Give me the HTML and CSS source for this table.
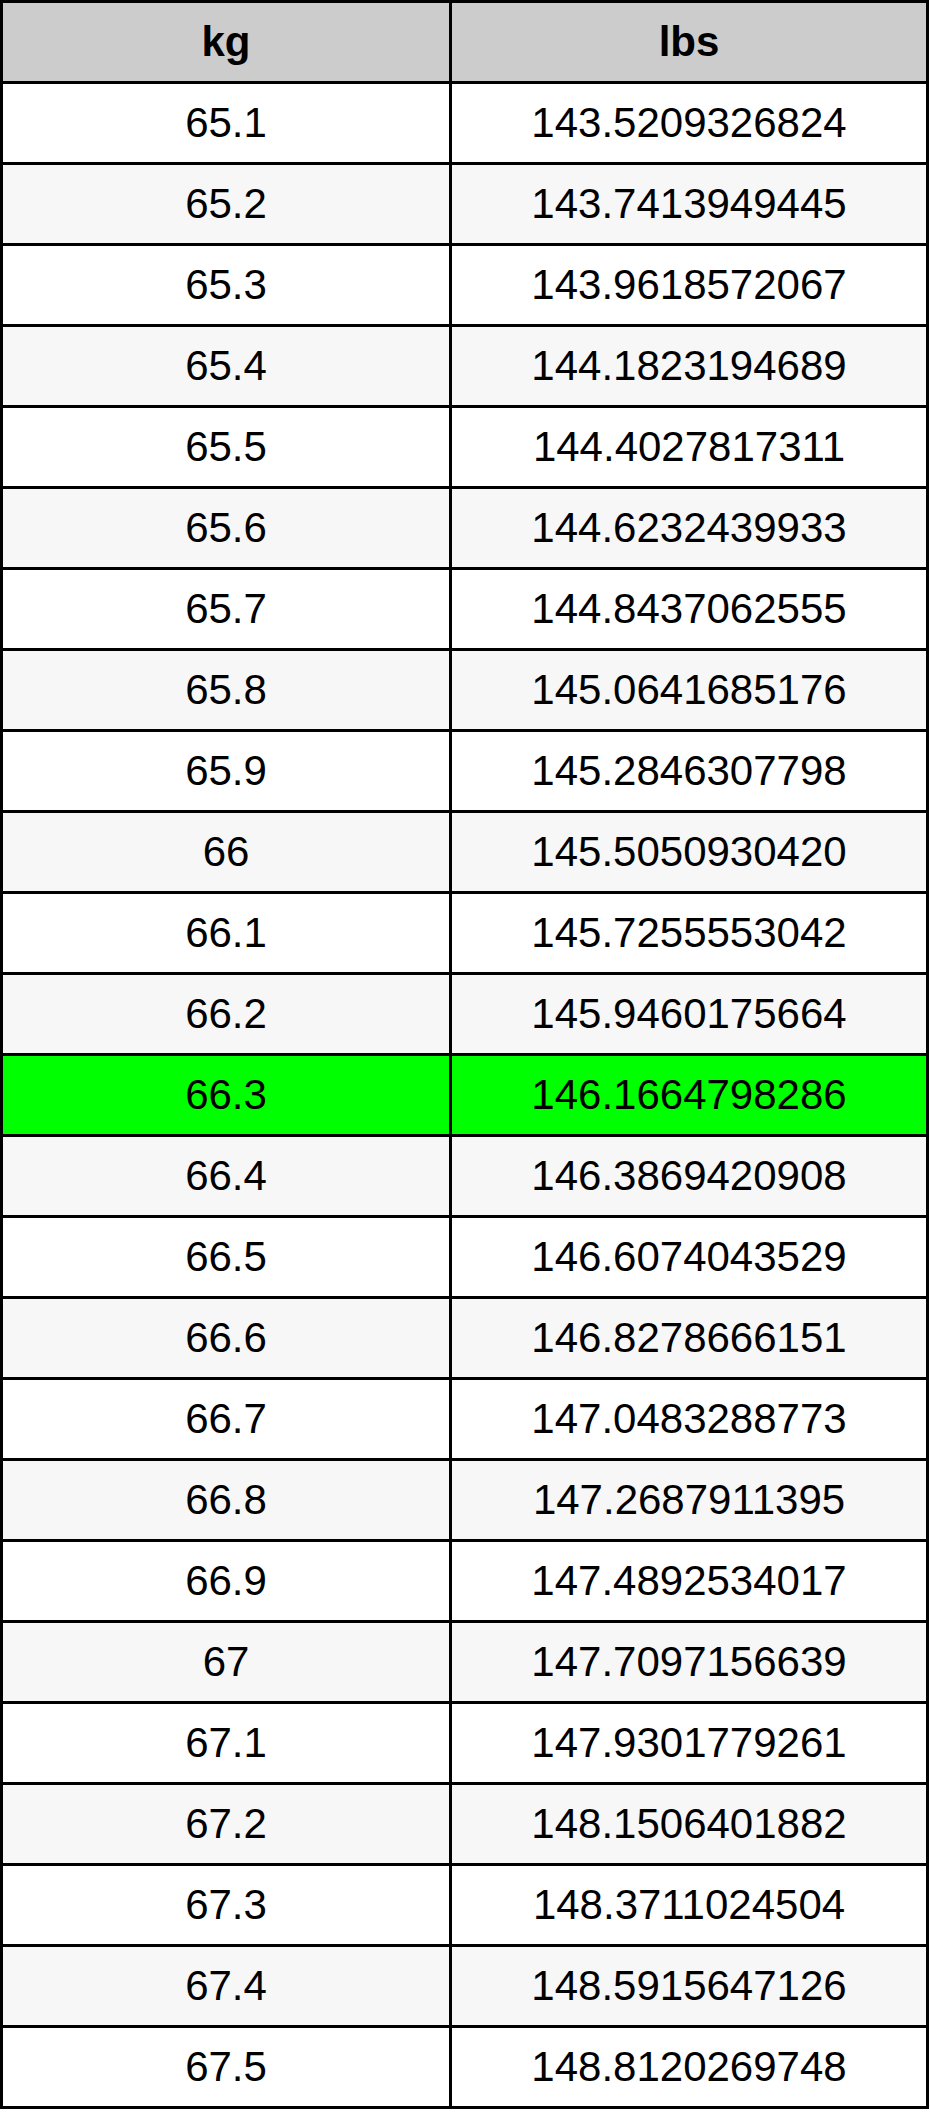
FILE: index.html
```html
<!DOCTYPE html>
<html lang="en">
<head>
<meta charset="utf-8">
<title>kg to lbs</title>
<link rel="stylesheet" href="styles.css">
</head>
<body>
<table class="conv">
  <thead>
    <tr><th class="c-kg">kg</th><th class="c-lbs">lbs</th></tr>
  </thead>
  <tbody>
    <tr><td>65.1</td><td>143.5209326824</td></tr>
    <tr><td>65.2</td><td>143.7413949445</td></tr>
    <tr><td>65.3</td><td>143.9618572067</td></tr>
    <tr><td>65.4</td><td>144.1823194689</td></tr>
    <tr><td>65.5</td><td>144.4027817311</td></tr>
    <tr><td>65.6</td><td>144.6232439933</td></tr>
    <tr><td>65.7</td><td>144.8437062555</td></tr>
    <tr><td>65.8</td><td>145.0641685176</td></tr>
    <tr><td>65.9</td><td>145.2846307798</td></tr>
    <tr><td>66</td><td>145.5050930420</td></tr>
    <tr><td>66.1</td><td>145.7255553042</td></tr>
    <tr><td>66.2</td><td>145.9460175664</td></tr>
    <tr class="hl"><td>66.3</td><td>146.1664798286</td></tr>
    <tr><td>66.4</td><td>146.3869420908</td></tr>
    <tr><td>66.5</td><td>146.6074043529</td></tr>
    <tr><td>66.6</td><td>146.8278666151</td></tr>
    <tr><td>66.7</td><td>147.0483288773</td></tr>
    <tr><td>66.8</td><td>147.2687911395</td></tr>
    <tr><td>66.9</td><td>147.4892534017</td></tr>
    <tr><td>67</td><td>147.7097156639</td></tr>
    <tr><td>67.1</td><td>147.9301779261</td></tr>
    <tr><td>67.2</td><td>148.1506401882</td></tr>
    <tr><td>67.3</td><td>148.3711024504</td></tr>
    <tr><td>67.4</td><td>148.5915647126</td></tr>
    <tr><td>67.5</td><td>148.8120269748</td></tr>
  </tbody>
</table>
</body>
</html>
```

FILE: styles.css
```css
html, body {
  margin: 0;
  padding: 0;
  background: #ffffff;
}

.conv {
  border-collapse: separate;
  border-spacing: 0;
  table-layout: fixed;
  width: 929px;
  border-top: 3px solid #000;
  border-left: 3px solid #000;
  font-family: "Liberation Sans", Arial, sans-serif;
  font-size: 42px;
  color: #000;
}

.conv th,
.conv td {
  padding: 0;
  line-height: 78px;
  text-align: center;
  border-right: 3px solid #000;
  border-bottom: 3px solid #000;
  background: #ffffff;
  white-space: nowrap;
}

.conv th {
  font-weight: bold;
  background: #cccccc;
}

.conv .c-kg {
  width: 446px;
}

.conv .c-lbs {
  width: 474px;
}

.conv tbody tr:nth-child(even) td {
  background: #f7f7f7;
}

.conv tbody tr.hl td {
  background: #00ff00;
}
```
